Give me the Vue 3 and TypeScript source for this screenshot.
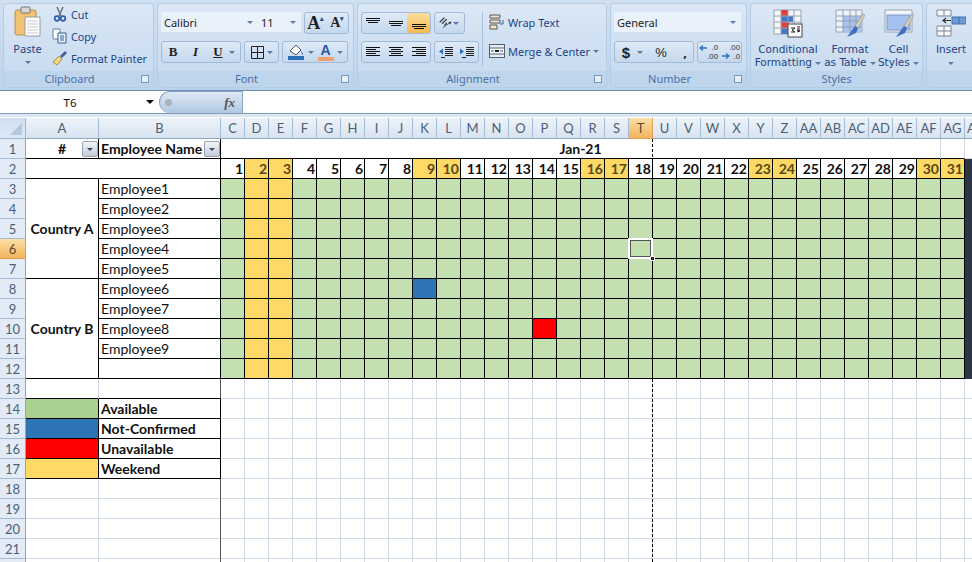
<script setup lang="ts">
interface Cell {
  id: string
  text?: string
  cls: string
  filter?: boolean
}

const columns = 'C D E F G H I J K L M N O P Q R S T U V W X Y Z AA AB AC AD AE AF AG'.split(' ')
const weekends = [2, 3, 9, 10, 16, 17, 23, 24, 30, 31]
const employees = ['Employee1', 'Employee2', 'Employee3', 'Employee4', 'Employee5', 'Employee6', 'Employee7', 'Employee8', 'Employee9', '']
const legend = [
  { label: 'Available', cls: 'sw-green' },
  { label: 'Not-Confirmed', cls: 'sw-blue' },
  { label: 'Unavailable', cls: 'sw-red' },
  { label: 'Weekend', cls: 'sw-yellow' },
]

const buildCells = () => {
  const cells: Cell[] = []
  const add = (id: string, cls: string, text = '', filter = false) => cells.push({ id, cls, text, filter })

  add('corner', 'corner')
  add('h-A', 'col-head', 'A')
  add('h-B', 'col-head', 'B')
  columns.forEach((c) => add('h-' + c, c === 'T' ? 'col-head active' : 'col-head', c))
  add('h-AH', 'col-head tail-head', 'A')

  add('r1', 'row-head', '1')
  add('A1', 'cell center bold right-black bottom-black', '#', true)
  add('B1', 'cell bold right-black bottom-black name-head', 'Employee Name', true)
  add('C1', 'cell center bold bottom-black span-month', 'Jan-21')
  add('AG1', 'cell bottom-black')
  add('AH1', 'cell tail')

  add('r2', 'row-head', '2')
  add('A2', 'cell span-two right-black bottom-black')
  for (let d = 1; d <= 31; d++) {
    add('d' + d, `cell day black ${weekends.includes(d) ? 'yellow' : ''}`, String(d))
  }
  add('AH2', 'tail-dark')

  for (let r = 3; r <= 12; r++) {
    add('r' + r, r === 6 ? 'row-head active' : 'row-head', String(r))
    if (r === 3) add('A3', 'cell center bold black span-five', 'Country A')
    if (r === 8) add('A8', 'cell center bold black span-five', 'Country B')
    add('B' + r, 'cell black emp', employees[r - 3])
    for (let d = 1; d <= 31; d++) {
      let fill = d === 2 || d === 3 ? 'yellow' : 'green'
      if (r === 8 && d === 9) fill = 'blue'
      if (r === 10 && d === 14) fill = 'red'
      add(`g${r}-${d}`, `cell black ${fill}`)
    }
    add('AH' + r, 'tail-dark')
  }

  for (let r = 13; r <= 22; r++) {
    // row 22 only just starts at the bottom of the window
    add('r' + r, 'row-head', r === 22 ? '' : String(r))
    const item = legend[r - 14]
    if (item) {
      add('A' + r, `cell black ${item.cls}`)
      add('B' + r, 'cell bold black emp', item.label)
    } else {
      add('A' + r, r === 13 ? 'cell bottom-black' : 'cell')
      add('B' + r, r === 13 ? 'cell bottom-black right-dark' : 'cell right-dark')
    }
    for (let d = 1; d <= 31; d++) add(`e${r}-${d}`, 'cell')
    add('AH' + r, 'cell tail')
  }
  return cells
}

const cells = buildCells()
</script>

<template>
  <div class="app">
    <div class="ribbon">
      <section class="group w-clip">
        <div class="body clip-body">
          <div class="big paste">
            <svg width="28" height="31" viewBox="0 0 28 31">
              <rect x="1" y="4" width="21" height="25" rx="2" fill="#efc274" stroke="#b98f4c" />
              <rect x="7" y="1" width="9" height="6" rx="1" fill="#d8d8d8" stroke="#777" />
              <path d="M11 11h15v19H11z" fill="#fff" stroke="#9a9a9a" />
              <path d="M13 15h11M13 18h11M13 21h11M13 24h11M13 27h11" stroke="#c2c7cf" />
            </svg>
            <span class="paste-label">Paste</span>
            <i class="caret"></i>
          </div>
          <div class="small-list">
            <div class="small-btn">
              <svg width="16" height="16" viewBox="0 0 16 16">
                <path d="M5 1l4 9M11 1L7 10" stroke="#6b7480" stroke-width="1.6" fill="none" />
                <circle cx="5" cy="12.5" r="2.3" fill="none" stroke="#2d5ca8" stroke-width="1.7" />
                <circle cx="11" cy="12.5" r="2.3" fill="none" stroke="#2d5ca8" stroke-width="1.7" />
              </svg>
              <span>Cut</span>
            </div>
            <div class="small-btn">
              <svg width="16" height="16" viewBox="0 0 16 16">
                <path d="M1 1h7v10H1z" fill="#fff" stroke="#5f7ea8" />
                <path d="M6 5h8v10H6z" fill="#eef3fa" stroke="#2f5c98" />
                <path d="M8 8h4M8 10h4M8 12h4" stroke="#2f5c98" />
              </svg>
              <span>Copy</span>
            </div>
            <div class="small-btn">
              <svg width="16" height="16" viewBox="0 0 16 16">
                <path d="M1 12l6-6 3 3-5 6z" fill="#f1d98a" stroke="#a98d3f" />
                <path d="M8 6l5-5 2 2-5 5z" fill="#4a5e9c" />
              </svg>
              <span>Format Painter</span>
            </div>
          </div>
        </div>
        <div class="label"><span></span><span>Clipboard</span><i class="launcher"></i></div>
      </section>

      <section class="group w-font">
        <div class="body stack">
          <div class="row">
            <div class="combo w-name"><span>Calibri</span><i class="caret"></i></div>
            <div class="combo w-size"><span>11</span><i class="caret"></i></div>
            <div class="box grow-box">
              <span class="seg grow-a">A<sup>▴</sup></span>
              <span class="seg shrink-a">A<sup>▾</sup></span>
            </div>
          </div>
          <div class="row">
            <div class="box w-biu">
              <span class="seg f-b">B</span>
              <span class="seg f-i">I</span>
              <span class="seg f-u">U</span>
              <i class="caret"></i>
            </div>
            <div class="box w-border">
              <svg width="15" height="15" viewBox="0 0 15 15">
                <path d="M1.5 1.5h12v12h-12zM7.5 1.5v12M1.5 7.5h12" fill="none" stroke="#222" />
              </svg>
              <i class="caret"></i>
            </div>
            <div class="box w-colors">
              <svg width="18" height="18" viewBox="0 0 18 18">
                <path d="M3 8l6-6 5 5-5 5z" fill="#fff" stroke="#555" />
                <path d="M14 7l2 4-1 1z" fill="#2a6fc0" />
                <rect x="1" y="13" width="16" height="4" fill="#2a6fb6" />
              </svg>
              <i class="caret"></i>
              <span class="color-a">A<b></b></span>
              <i class="caret"></i>
            </div>
          </div>
        </div>
        <div class="label"><span></span><span>Font</span><i class="launcher"></i></div>
      </section>

      <section class="group w-align">
        <div class="body align-body">
          <div class="stack">
            <div class="row">
              <div class="box w-three">
                <span class="seg"><svg width="16" height="14" viewBox="0 0 16 14"><path d="M1 2.500h14M1 4.500h14M3 6.500h10" stroke="#111" /></svg></span>
                <span class="seg"><svg width="16" height="14" viewBox="0 0 16 14"><path d="M1 5.500h14M1 7.500h14M3 9.500h10" stroke="#111" /></svg></span>
                <span class="seg on"><svg width="16" height="14" viewBox="0 0 16 14"><path d="M1 8.500h14M1 10.500h14M3 12.500h10" stroke="#111" /></svg></span>
              </div>
              <div class="box w-orient">
                <svg width="18" height="16" viewBox="0 0 18 16">
                  <path d="M1 7l6-6M4 9l6-6M7 11l3-3" stroke="#333" stroke-width="1.500" fill="none" />
                  <path d="M5 14l10-7" stroke="#333" fill="none" />
                  <path d="M16 6l-1.500 4-2.500-3z" fill="#333" />
                </svg>
                <i class="caret"></i>
              </div>
            </div>
            <div class="row">
              <div class="box w-three">
                <span class="seg"><svg width="16" height="14" viewBox="0 0 16 14"><path d="M1 2.500h14M1 4.500h10M1 6.500h14M1 8.500h10M1 10.500h14" stroke="#111" /></svg></span>
                <span class="seg"><svg width="16" height="14" viewBox="0 0 16 14"><path d="M1 2.500h14M3 4.500h10M1 6.500h14M3 8.500h10M1 10.500h14" stroke="#111" /></svg></span>
                <span class="seg"><svg width="16" height="14" viewBox="0 0 16 14"><path d="M1 2.500h14M5 4.500h10M1 6.500h14M5 8.500h10M1 10.500h14" stroke="#111" /></svg></span>
              </div>
              <div class="box w-indent">
                <span class="seg"><svg width="16" height="14" viewBox="0 0 16 14"><path d="M7 2.500h8M7 4.500h8M7 6.500h8M7 8.500h8M7 10.500h8M3 12.500h4" stroke="#222" /><path d="M1 6.500l4-3v6z" fill="#2f6fc0" /></svg></span>
                <span class="seg"><svg width="16" height="14" viewBox="0 0 16 14"><path d="M7 2.500h8M7 4.500h8M7 6.500h8M7 8.500h8M7 10.500h8M3 12.500h4" stroke="#222" /><path d="M5 6.500l-4-3v6z" fill="#2f6fc0" /></svg></span>
              </div>
            </div>
          </div>
          <div class="sep"></div>
          <div class="stack wrap-col">
            <div class="small-btn">
              <svg width="16" height="16" viewBox="0 0 16 16">
                <path d="M1 1h10v3H1zM1 6h10v3H1zM1 11h7v4H1z" fill="#f6e9cf" stroke="#555" />
                <path d="M14 6v4h-3" fill="none" stroke="#2a5ea8" />
              </svg>
              <span>Wrap Text</span>
            </div>
            <div class="small-btn">
              <svg width="16" height="16" viewBox="0 0 16 16">
                <rect x="0.5" y="1.5" width="15" height="13" fill="#e9eef6" stroke="#55606e" />
                <rect x="0.5" y="5" width="15" height="6" fill="#fff" stroke="#55606e" />
                <path d="M2 8h3M11 8h3" stroke="#2a5ea8" />
                <path d="M6 8h4" stroke="#222" stroke-width="2" />
              </svg>
              <span>Merge &amp; Center</span>
              <i class="caret"></i>
            </div>
          </div>
        </div>
        <div class="label"><span></span><span>Alignment</span><i class="launcher"></i></div>
      </section>

      <section class="group w-number">
        <div class="body stack">
          <div class="row">
            <div class="combo w-general"><span>General</span><i class="caret"></i></div>
          </div>
          <div class="row">
            <div class="box w-money">
              <span class="seg money">$</span>
              <i class="caret"></i>
              <span class="seg pct">%</span>
              <span class="seg comma">,</span>
            </div>
            <div class="box w-dec">
              <span class="seg">
                <svg class="dec-icon" width="21" height="18" viewBox="0 0 21 18">
                  <path d="M2 5h7M5 2.500L2 5l3 2.500" fill="none" stroke="#2f6fc0" stroke-width="1.300" />
                  <text x="20" y="7">.0</text>
                  <text x="20" y="16">.00</text>
                </svg>
              </span>
              <span class="seg">
                <svg class="dec-icon" width="21" height="18" viewBox="0 0 21 18">
                  <text x="20" y="7">.00</text>
                  <path d="M2 13h7M6 10.500L9 13l-3 2.500" fill="none" stroke="#2f6fc0" stroke-width="1.300" />
                  <text x="20" y="16">.0</text>
                </svg>
              </span>
            </div>
          </div>
        </div>
        <div class="label"><span></span><span>Number</span><i class="launcher"></i></div>
      </section>

      <section class="group w-styles">
        <div class="body tall-row">
          <div class="tall w-cf">
            <svg width="30" height="29" viewBox="0 0 30 29">
              <path d="M1 1h27v24H1z" fill="#f4f6fa" stroke="#9aa4b2" />
              <rect x="8" y="1" width="7" height="6" fill="#e2403a" />
              <rect x="8" y="7" width="12" height="6" fill="#4a78c8" />
              <rect x="8" y="13" width="8" height="6" fill="#e2403a" />
              <rect x="8" y="19" width="7" height="6" fill="#4a78c8" />
              <path d="M1 7h27M1 13h27M1 19h27M8 1v24M15 1v24M21 1v24" stroke="#9aa4b2" fill="none" />
              <rect x="15" y="15" width="14" height="13" fill="#fff" stroke="#444" />
              <path d="M18 19h4l-3 2 3 2h-4M24 18h3M24 20h3M24 23l3-1-3-1" stroke="#222" fill="none" />
            </svg>
            <span class="tall-text">Conditional<br />Formatting <i class="caret"></i></span>
          </div>
          <div class="tall w-ft">
            <svg width="30" height="29" viewBox="0 0 30 29">
              <path d="M1 1h26v22H1z" fill="#eef2f8" stroke="#9aa4b2" />
              <rect x="8" y="7" width="19" height="16" fill="#a9c2ee" />
              <path d="M1 7h26M1 12h26M1 18h26M8 1v22M15 1v22M21 1v22" stroke="#8fa0b8" fill="none" />
              <path d="M20 17l8-12 2 1-7 13z" fill="#d8d0b8" stroke="#8a8570" stroke-width=".5" />
              <path d="M12 28l8-11 3 2-2 5z" fill="#3f70c0" />
            </svg>
            <span class="tall-text">Format<br />as Table <i class="caret"></i></span>
          </div>
          <div class="tall w-cs">
            <svg width="30" height="29" viewBox="0 0 30 29">
              <path d="M1 1h27v22H1z" fill="#f2f5fa" stroke="#9aa4b2" />
              <rect x="3" y="6" width="23" height="15" fill="#a4c0f0" stroke="#7d98c8" />
              <path d="M20 17l8-12 2 1-7 13z" fill="#d8d0b8" stroke="#8a8570" stroke-width=".5" />
              <path d="M12 28l8-11 3 2-2 5z" fill="#3f70c0" />
            </svg>
            <span class="tall-text">Cell<br />Styles <i class="caret"></i></span>
          </div>
        </div>
        <div class="label plain"><span></span><span>Styles</span><span></span></div>
      </section>

      <section class="group w-cells">
        <div class="body tall-row">
          <div class="tall w-insert">
            <svg width="30" height="29" viewBox="0 0 30 29">
              <path d="M1 1h14v6H1zM8 1v6M1 17h14v10H1zM1 22h14M8 17v10" fill="#f6f8fb" stroke="#7a8594" />
              <rect x="16" y="8" width="14" height="7" fill="#6b9ad6" stroke="#4a73aa" />
              <path d="M23 8v7" stroke="#4a73aa" />
              <path d="M7 11.500h8M10 9l-3 2.500L10 14" fill="none" stroke="#333" stroke-width="1.200" />
            </svg>
            <span class="tall-text">Insert</span>
            <i class="caret"></i>
          </div>
        </div>
        <div class="label plain"><span></span><span></span><span></span></div>
      </section>
    </div>

    <div class="formula-bar">
      <div class="name-box"><span class="name-text">T6</span><i class="name-arrow"></i></div>
      <div class="fx-box"><i class="fx-dot"></i><span class="fx">fx</span></div>
      <div class="formula-input"></div>
    </div>

    <div class="sheet">
      <div v-for="cell in cells" :key="cell.id" :class="cell.cls">
        <span v-if="cell.text" class="txt">{{ cell.text }}</span>
        <i v-if="cell.filter" class="filter"></i>
      </div>
      <div class="page-break"></div>
      <div class="selection"><i class="handle"></i></div>
    </div>
  </div>
</template>

<style scoped>
.app {
  width: 972px;
  height: 562px;
  overflow: hidden;
  background: #fff;
  font-family: "Noto Sans", sans-serif;
  font-size: 11px;
  color: #1c4485;
}

.ribbon {
  display: flex;
  gap: 3px;
  height: 91px;
  padding: 3px 0 0 3px;
  box-sizing: border-box;
  background: linear-gradient(#cfe0f3, #bcd3eb);
  border-bottom: 1px solid #6f8fb2;
}

.group {
  flex: none;
  display: flex;
  flex-direction: column;
  height: 85px;
  box-sizing: border-box;
  border: 1px solid #b5cce5;
  border-radius: 4px;
  background: linear-gradient(#dbe7f5, #c5d9ef);
  overflow: hidden;
}

.w-clip { width: 151px; }
.w-font { width: 197px; }
.w-align { width: 250px; }
.w-number { width: 137px; }
.w-styles { width: 173px; }
.w-cells { width: 60px; flex: none; }

.body {
  flex: 1;
  min-height: 0;
}

.label {
  flex: none;
  display: grid;
  grid-template-columns: 1fr auto 1fr;
  align-items: center;
  height: 16px;
  padding-right: 18px;
  background: #bfd5ec;
  color: #4a70a8;
  font-size: 11px;
  line-height: 16px;
}

.label.plain {
  padding-right: 0;
}

.launcher {
  justify-self: end;
  width: 6px;
  height: 6px;
  margin-right: -14px;
  border: 1px solid #7d97b8;
  background: #e8f0f9;
}

.caret {
  display: inline-block;
  flex: none;
  width: 0;
  height: 0;
  border-left: 3px solid transparent;
  border-right: 3px solid transparent;
  border-top: 3px solid #5b7ba6;
  vertical-align: middle;
}

.clip-body {
  display: flex;
  padding-top: 2px;
}

.paste {
  display: flex;
  flex-direction: column;
  align-items: center;
  width: 47px;
  flex: none;
}

.paste-label {
  margin-top: 5px;
  line-height: 14px;
}

.paste .caret {
  margin-top: 5px;
}

.small-list {
  display: flex;
  flex-direction: column;
  gap: 6px;
  margin-left: 1px;
  font-size: 10.8px;
}

.small-btn {
  display: flex;
  align-items: center;
  gap: 3px;
  height: 16px;
  white-space: nowrap;
}

.stack {
  display: flex;
  flex-direction: column;
  gap: 7px;
  padding: 8px 0 0 3px;
}

.row {
  display: flex;
  gap: 3px;
  height: 22px;
}

.combo {
  display: flex;
  align-items: center;
  justify-content: space-between;
  box-sizing: border-box;
  padding: 0 5px 0 3px;
  height: 21px;
  background: #e9f1fa;
  color: #222;
  border-bottom: 1px solid #d2e0f0;
}

.w-name { width: 97px; margin-right: -3px; }
.w-size { width: 43px; }
.w-general { width: 127px; }

.box {
  display: flex;
  align-items: center;
  box-sizing: border-box;
  height: 22px;
  border: 1px solid #a3bad6;
  border-radius: 3px;
  background: linear-gradient(#deeaf7, #c4d8ee);
  color: #222;
}

.seg {
  flex: 1;
  display: flex;
  align-items: center;
  justify-content: center;
  height: 100%;
}

.seg.on {
  background: linear-gradient(#f9dd9c, #f8b850);
  border-radius: 2px;
}

.grow-box { width: 45px; }

.grow-a, .shrink-a {
  font-family: "Liberation Serif", serif;
  font-weight: 700;
  color: #1f1f1f;
}

.grow-a { font-size: 18px; }
.shrink-a { font-size: 14px; }

.grow-a sup, .shrink-a sup {
  font-size: 7px;
  color: #2b4f8a;
  margin-top: -8px;
}

.w-biu { width: 80px; padding-right: 5px; }

.f-b, .f-i, .f-u {
  font-family: "Liberation Serif", serif;
  font-weight: 700;
  font-size: 13px;
}

.f-i { font-style: italic; }
.f-u { text-decoration: underline; }

.w-border { width: 35px; justify-content: space-between; padding: 0 5px; }
.w-colors { width: 66px; justify-content: space-between; padding: 0 4px; }

.color-a {
  display: flex;
  flex-direction: column;
  align-items: center;
  color: #2a55a5;
  font-family: "Liberation Sans", sans-serif;
  font-weight: 700;
  font-size: 14px;
  line-height: 13px;
}

.color-a b {
  width: 16px;
  height: 4px;
  background: #f0a070;
}

.align-body {
  display: flex;
}

.w-three { width: 70px; }
.w-orient { width: 31px; justify-content: space-between; padding: 0 5px 0 4px; }
.w-indent { width: 45px; }

.sep {
  width: 1px;
  height: 54px;
  margin: 8px 6px 0 3px;
  background: #a9c0da;
}

.wrap-col {
  gap: 13px;
  padding: 10px 0 0 0;
}

.w-money { width: 80px; }
.w-dec { width: 45px; }

.money {
  flex: none;
  width: 22px;
  font-family: "Liberation Sans", sans-serif;
  font-size: 15px;
  font-weight: 700;
}

.pct {
  flex: none;
  width: 32px;
  margin-left: 2px;
  font-family: "Liberation Sans", sans-serif;
  font-size: 13px;
}

.comma { font-weight: 700; font-size: 13px; }

.dec-icon text {
  font-family: "Liberation Sans", sans-serif;
  font-size: 7.8px;
  text-anchor: end;
  fill: #333;
}

.tall-row {
  display: flex;
  padding-top: 5px;
}

.tall {
  display: flex;
  flex-direction: column;
  align-items: center;
  flex: none;
}

.tall-text {
  margin-top: 5px;
  text-align: center;
  font-family: "DejaVu Sans", sans-serif;
  font-size: 10.5px;
  line-height: 13px;
  white-space: nowrap;
}

.tall > .caret {
  margin-top: 6px;
}

.w-cf { width: 74px; }
.w-ft { width: 50px; }
.w-cs { width: 47px; }
.w-insert { width: 48px; }

.formula-bar {
  display: flex;
  height: 23px;
  margin-bottom: 4px;
  background: #fff;
  border-bottom: 1px solid #7f99b6;
  box-shadow: 0 3px 0 #dbe6f3;
  box-sizing: border-box;
}

.name-box {
  display: flex;
  align-items: center;
  width: 159px;
  flex: none;
  color: #111;
  font-size: 11.5px;
}

.name-text {
  width: 140px;
  text-align: center;
}

.name-arrow {
  width: 0;
  height: 0;
  margin-left: 6px;
  border-left: 4px solid transparent;
  border-right: 4px solid transparent;
  border-top: 4px solid #111;
}

.fx-box {
  display: flex;
  align-items: center;
  justify-content: space-between;
  width: 84px;
  flex: none;
  box-sizing: border-box;
  padding: 0 7px 0 5px;
  border-radius: 11px 0 0 11px;
  border: 1px solid #8aa5c6;
  border-width: 1px 1px 0 1px;
  background: linear-gradient(#dfe9f5, #b0c7e2);
}

.fx-dot {
  width: 7px;
  height: 7px;
  border-radius: 50%;
  background: #a8b3c0;
}

.fx {
  font-family: "Liberation Serif", serif;
  font-style: italic;
  font-weight: 700;
  font-size: 13px;
  color: #555;
}

.formula-input {
  flex: 1;
}

.sheet {
  position: relative;
  display: grid;
  grid-template-columns: 26px 73px 122px repeat(31, 24px) 7px;
  grid-auto-rows: 20px;
  grid-template-rows: 21px;
  height: 444px;
  overflow: hidden;
  font-family: Lato, sans-serif;
  font-size: 14px;
  color: #111;
}

.corner {
  position: relative;
  background: linear-gradient(#cfdff1, #dde8f5);
  border-right: 1px solid #9eb6ce;
  border-bottom: 1px solid #9eb6ce;
  box-sizing: border-box;
}

.corner::after {
  content: "";
  position: absolute;
  right: 3px;
  bottom: 3px;
  width: 0;
  height: 0;
  border-left: 12px solid transparent;
  border-bottom: 12px solid #b3c8df;
}

.col-head, .row-head {
  display: flex;
  align-items: center;
  justify-content: center;
  box-sizing: border-box;
  color: #4b5f78;
  overflow: hidden;
  font-size: 13px;
}

.col-head {
  background: linear-gradient(#eef3fa, #d8e3f0);
  border-right: 1px solid #a5bbd3;
  border-bottom: 1px solid #8ea7c2;
}

.row-head {
  background: #e2ebf6;
  border-right: 1px solid #8ea7c2;
  border-bottom: 1px solid #a5bbd3;
}

.col-head.active, .row-head.active {
  background: linear-gradient(#fbe0a6, #f3b35e);
  color: #5a4a30;
  border-color: #e0a050;
}

.tail-head {
  justify-content: flex-start;
  border-right: none;
}

.cell {
  display: flex;
  align-items: center;
  position: relative;
  box-sizing: border-box;
  min-width: 0;
  overflow: hidden;
  white-space: nowrap;
  background: #fff;
  border-right: 1px solid #d0d7e5;
  border-bottom: 1px solid #d0d7e5;
}

.txt {
  padding: 0 2px;
}

.center { justify-content: center; }
.bold { font-weight: 700; }
.black { border-color: #000; }
.right-black { border-right-color: #000; }
.bottom-black { border-bottom-color: #000; }
.right-dark { border-right-color: #555; }

.span-month { grid-column: span 30; }
.span-two { grid-column: span 2; }
.span-five { grid-row: span 5; }

.name-head {
  overflow: visible;
}

.filter {
  position: absolute;
  right: 0;
  top: 2px;
  width: 16px;
  height: 16px;
  box-sizing: border-box;
  border: 1px solid #98a4b4;
  border-radius: 2px;
  background: linear-gradient(#f2f4f8, #c5cdd9);
}

.filter::after {
  content: "";
  position: absolute;
  left: 4px;
  top: 6px;
  width: 0;
  height: 0;
  border-left: 3px solid transparent;
  border-right: 3px solid transparent;
  border-top: 3px solid #344a6a;
}

.day {
  justify-content: flex-end;
  font-weight: 700;
}

.day .txt {
  padding: 0 1px 0 0;
}

.day.yellow { color: #55481a; }
.yellow { background: #ffd966; }
.green { background: #c4dfb0; }
.blue { background: #2e75b6; }
.red { background: #ff0000; }
.sw-green { background: #a9d08e; }
.sw-blue { background: #2e75b6; }
.sw-red { background: #ff0000; }
.sw-yellow { background: #ffd966; }

.tail { border-right: none; }

.tail-dark {
  background: #2c3644;
}

.page-break {
  position: absolute;
  left: 652px;
  top: 21px;
  bottom: 0;
  border-left: 1px dashed #000;
}

.selection {
  position: absolute;
  left: 628px;
  top: 120px;
  width: 25px;
  height: 21px;
  box-sizing: border-box;
  border: 2px solid #fff;
  box-shadow: inset 0 0 0 1px #555;
}

.handle {
  position: absolute;
  right: -4px;
  bottom: -4px;
  width: 5px;
  height: 5px;
  box-sizing: border-box;
  background: #222;
  border: 1px solid #fff;
  border-radius: 1px;
}
</style>

<style>
html, body {
  margin: 0;
  background: #fff;
}
</style>
